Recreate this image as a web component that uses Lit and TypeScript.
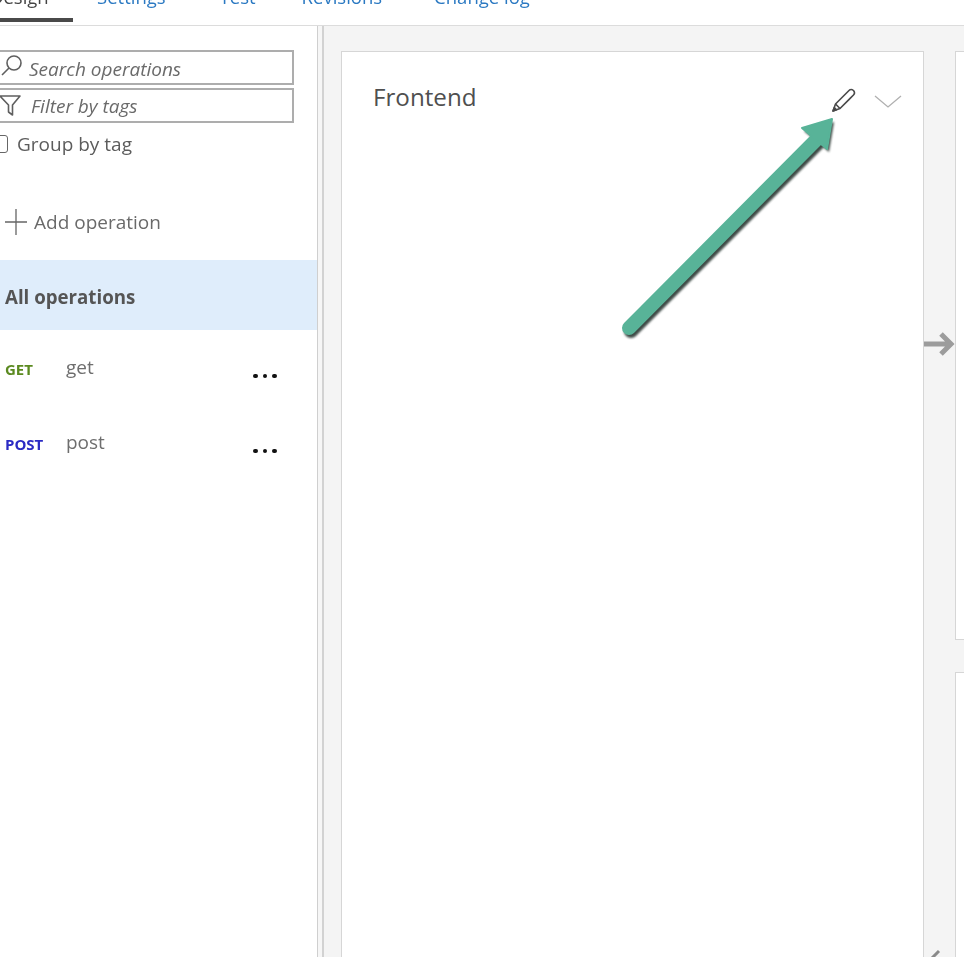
import { LitElement, html, css } from "lit";
import { customElement } from "lit/decorators.js";

@customElement("app-root")
export class AppRoot extends LitElement {
  static styles = css`
    :host {
      display: block;
      width: 964px;
      height: 957px;
      overflow: hidden;
      position: relative;
      background: #fff;
      font-family: "Open Sans", "Noto Sans", sans-serif;
      color: #5a5a5a;
    }
    .soft {
      filter: blur(0.55px);
      height: 100%;
      display: flex;
      flex-direction: column;
    }
    .tabs {
      height: 26px;
      flex: none;
      box-sizing: border-box;
      border-bottom: 1px solid #dcdcdc;
      display: flex;
      margin-left: -30px;
      overflow: hidden;
      font-size: 18.5px;
      color: #2b79c2;
    }
    .tab {
      height: 22px;
      padding: 0 24px;
      box-sizing: border-box;
      line-height: 0;
      white-space: nowrap;
    }
    .tab span { display: block; margin-top: -3px; }
    .tab.active {
      color: #444;
      border-bottom: 4px solid #4a4a4a;
      width: 103px;
      flex: none;
    }
    .tab.active span { margin-left: -4px; }
    .tab.t-set { margin-left: 0; }
    .tab.t-test { margin-left: 6px; }
    .tab.t-rev { margin-left: -2px; }
    .tab.t-log { margin-left: 4px; }
    .body {
      flex: 1;
      display: flex;
      min-height: 0;
    }
    .left {
      width: 317px;
      flex: none;
      box-sizing: border-box;
      padding-top: 24px;
      overflow: hidden;
    }
    .field {
      margin-left: -4px;
      width: 298px;
      box-sizing: border-box;
      height: 34.5px;
      border: 2px solid #adadad;
      display: flex;
      align-items: center;
      font-style: italic;
      font-size: 19px;
      color: #6a6a6a;
      white-space: nowrap;
    }
    .field span { margin-top: 2px; }
    .field.search span { margin-top: 3px; }
    .field + .field { margin-top: 3.5px; }
    .field svg { flex: none; display: block; }
    .field.search svg { margin: 0 3px 0 1px; }
    .field.filter svg { margin: 0 10px 0 0; }
    .check {
      display: flex;
      align-items: center;
      height: 36px;
      margin-top: 3px;
      font-size: 19px;
      color: #5c5c5c;
      white-space: nowrap;
    }
    .box {
      width: 9px;
      height: 16px;
      margin-left: -3px;
      margin-right: 9px;
      border: 1.5px solid #666;
      border-radius: 3px;
      flex: none;
    }
    .add {
      display: flex;
      align-items: center;
      height: 40px;
      margin-top: 40px;
      padding-left: 5px;
      font-size: 19px;
      color: #6a6a6a;
    }
    .add svg { margin-right: 7px; display: block; }
    .all {
      margin-top: 18px;
      height: 70px;
      box-sizing: border-box;
      padding: 3px 0 0 5px;
      background: #dfedfb;
      display: flex;
      align-items: center;
      font-size: 18.7px;
      font-weight: 700;
      color: #555;
    }
    .op {
      height: 75px;
      display: grid;
      grid-template-columns: 61px 187px 28px;
      padding-left: 5px;
      padding-top: 22px;
      box-sizing: border-box;
      align-items: start;
    }
    .method {
      font-size: 15px;
      font-weight: 700;
      line-height: 34px;
    }
    .get { color: #5b8a20; }
    .post { color: #2b2bc4; }
    .name { font-size: 19px; line-height: 30px; color: #6e6e6e; }
    .dots {
      display: flex;
      gap: 5px;
      padding-top: 22px;
    }
    .dots i {
      width: 4.5px;
      height: 4.5px;
      border-radius: 50%;
      background: #111;
    }
    .split {
      width: 7px;
      flex: none;
      box-sizing: border-box;
      border-left: 1.5px solid #cfcfcf;
      border-right: 2px solid #d2d2d2;
      background: #f6f6f6;
    }
    .main {
      flex: 1;
      min-width: 0;
      background: #f4f4f4;
      display: flex;
      padding: 25px 0 0 17px;
      overflow: hidden;
    }
    .card {
      background: #fff;
      border: 1.5px solid #d6d6d6;
      box-sizing: border-box;
    }
    .front {
      width: 583px;
      height: 960px;
      flex: none;
      padding: 25px 21px 0 31px;
    }
    .head { display: flex; align-items: flex-start; justify-content: space-between; height: 40px; }
    .title { font-size: 24.2px; line-height: 40px; color: #4f4f4f; }
    .tools { display: flex; align-items: flex-start; gap: 17px; }
    .tools svg { display: block; }
    .pencil { margin-top: 10px; }
    .chev { margin-top: 18px; }
    .gutter {
      width: 31px;
      flex: none;
      display: flex;
      flex-direction: column;
      justify-content: space-between;
      height: 906px;
      padding-top: 281px;
      box-sizing: border-box;
    }
    .gutter svg { display: block; }
    .col {
      flex: 1;
      min-width: 40px;
      display: flex;
      flex-direction: column;
      gap: 32px;
    }
    .c1 { height: 589px; flex: none; width: 60px; }
    .c2 { height: 400px; flex: none; width: 60px; }
    .pointer {
      position: absolute;
      left: 610px;
      top: 105px;
      pointer-events: none;
      overflow: visible;
    }
    .pointer-shadow { filter: blur(1px); }
  `;

  render() {
    return html`
      <div class="soft">
        <nav class="tabs">
          <div class="tab active"><span>Design</span></div>
          <div class="tab t-set"><span>Settings</span></div>
          <div class="tab t-test"><span>Test</span></div>
          <div class="tab t-rev"><span>Revisions</span></div>
          <div class="tab t-log"><span>Change log</span></div>
        </nav>
        <div class="body">
          <aside class="left">
            <div class="field search">
              <svg width="27" height="26" viewBox="0 0 27 26" fill="none" stroke="#5f5f5f" stroke-width="1.6">
                <circle cx="15" cy="9" r="7"></circle>
                <path d="M10 14 L3 21"></path>
              </svg>
              <span>Search operations</span>
            </div>
            <div class="field filter">
              <svg width="23" height="26" viewBox="0 0 23 26" fill="none" stroke="#5f5f5f" stroke-width="1.6" stroke-linejoin="round">
                <path d="M2 4 H22 L14.5 13 V23 L10.5 20 V13 Z"></path>
              </svg>
              <span>Filter by tags</span>
            </div>
            <label class="check"><span class="box"></span>Group by tag</label>
            <div class="add">
              <svg width="22" height="26" viewBox="0 0 22 26" stroke="#666" stroke-width="1.3">
                <path d="M0 13 H22 M11 0 V26"></path>
              </svg>
              Add operation
            </div>
            <div class="all">All operations</div>
            <div class="op">
              <span class="method get">GET</span>
              <span class="name">get</span>
              <span class="dots"><i></i><i></i><i></i></span>
            </div>
            <div class="op">
              <span class="method post">POST</span>
              <span class="name">post</span>
              <span class="dots"><i></i><i></i><i></i></span>
            </div>
          </aside>
          <div class="split"></div>
          <main class="main">
            <section class="card front">
              <div class="head">
                <span class="title">Frontend</span>
                <span class="tools">
                  <svg class="pencil" width="26" height="26" viewBox="0 0 26 26" fill="none" stroke="#4a4a4a" stroke-width="1.6" stroke-linejoin="round">
                    <path d="M2 24 L4.5 17 L18 3.5 Q20 1.5 22.5 3.5 Q24.5 6 22.5 8 L9 21.5 Z"></path>
                    <path d="M4.5 17 L9 21.5"></path>
                    <path d="M2 24 L3.3 20.5 L5.5 22.7 Z" fill="#333"></path>
                  </svg>
                  <svg class="chev" width="28" height="14" viewBox="0 0 28 14" fill="none" stroke="#b0b0b0" stroke-width="1.3">
                    <path d="M1 1 L14 12 L27 1"></path>
                  </svg>
                </span>
              </div>
            </section>
            <div class="gutter">
              <svg width="31" height="24" viewBox="0 0 31 24" fill="none" stroke="#9c9c9c" stroke-width="5">
                <path d="M0 12 H27 M17 2 L27 12 L17 22"></path>
              </svg>
              <svg width="31" height="8" viewBox="0 0 31 8" fill="none" stroke="#8a8a8a" stroke-width="3">
                <path d="M8 9 L15 2"></path>
              </svg>
            </div>
            <div class="col">
              <div class="card c1"></div>
              <div class="card c2"></div>
            </div>
          </main>
        </div>
        <svg class="pointer" width="240" height="240" viewBox="0 0 240 240" fill="none" aria-hidden="true">
          <g class="pointer-shadow" transform="translate(2 3)" opacity="0.9">
            <path d="M19 223 L208 33" stroke="#2a3833" stroke-width="14" stroke-linecap="round"></path>
            <path d="M192 23 L222 14 L217 44 Z" fill="#2a3833"></path>
          </g>
          <path d="M19 223 L208 33" stroke="#58b398" stroke-width="14" stroke-linecap="round"></path>
          <path d="M192 23 L222 14 L217 44 Z" fill="#58b398" stroke="#58b398" stroke-width="2" stroke-linejoin="round"></path>
        </svg>
      </div>
    `;
  }
}
